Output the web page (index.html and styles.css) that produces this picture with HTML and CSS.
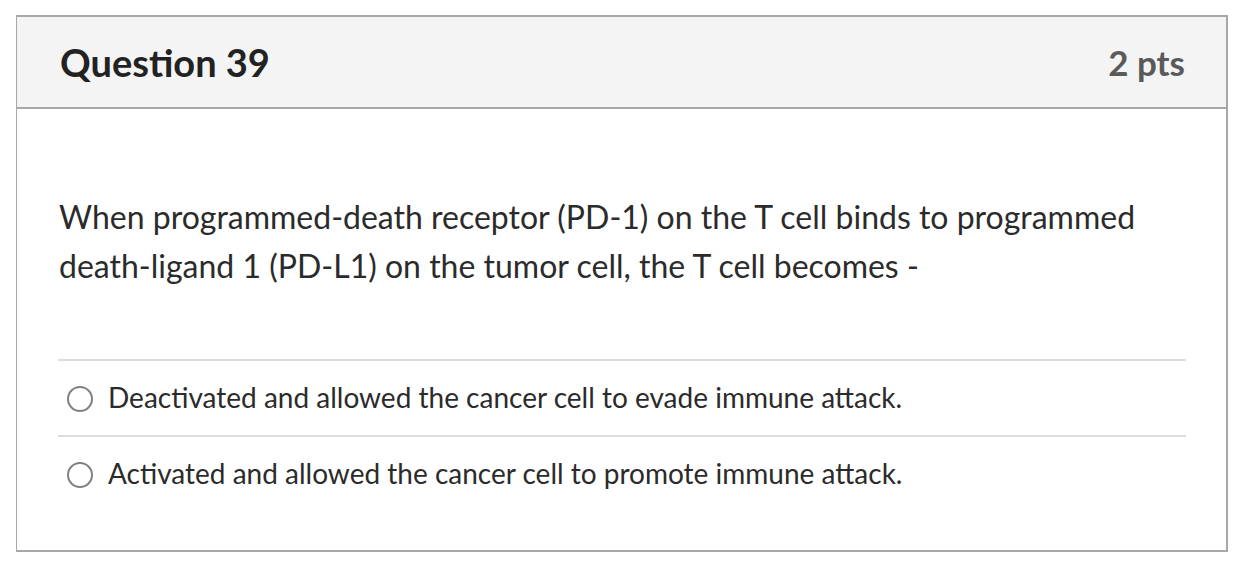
FILE: index.html
```html
<!DOCTYPE html>
<html lang="en">
<head>
<meta charset="utf-8">
<title>Question 39</title>
<link rel="stylesheet" href="styles.css">
</head>
<body>
<div class="card">
  <div class="card-header">
    <div class="title">Question 39</div>
    <div class="pts">2 pts</div>
  </div>
  <div class="card-body">
    <p class="question-text">When programmed-death receptor (PD-1) on the T cell binds to programmed death-ligand 1 (PD-L1) on the tumor cell, the T cell becomes -</p>
    <div class="answers">
      <label class="answer"><span class="radio"></span><span class="answer-text">Deactivated and allowed the cancer cell to evade immune attack.</span></label>
      <label class="answer"><span class="radio"></span><span class="answer-text">Activated and allowed the cancer cell to promote immune attack.</span></label>
    </div>
  </div>
</div>
</body>
</html>
```
FILE: styles.css
```css
html, body {
  margin: 0;
  padding: 0;
  background: #ffffff;
}
body {
  font-family: Lato, "Noto Sans", sans-serif;
  color: #2b2b2b;
}
.card {
  margin: 15px 26px 0 16px;
  border: 2px solid #a8a8a8;
  border-left-width: 1px;
}
.card-header {
  height: 90px;
  background: #f4f4f4;
  border-bottom: 2px solid #a8a8a8;
  display: flex;
  align-items: center;
  justify-content: space-between;
  padding: 0 41px 0 43px;
}
.title {
  font-weight: 700;
  font-size: 38px;
  color: #222;
}
.pts {
  font-weight: 700;
  font-size: 35px;
  color: #5a5a5a;
}
.card-body {
  padding: 83px 40px 39px 41px;
}
.question-text {
  margin: 0 0 69px 1px;
  font-size: 32px;
  line-height: 49px;
  color: #2b2b2b;
}
.answers {
  display: flex;
  flex-direction: column;
}
.answer {
  display: flex;
  align-items: center;
  height: 74px;
  border-top: 2px solid #dcdcdc;
  gap: 15px;
}
.radio {
  width: 22px;
  height: 22px;
  border: 2px solid #808080;
  border-radius: 50%;
  margin-left: 9px;
  margin-top: 2px;
  flex: none;
}
.answer-text {
  font-size: 28px;
  color: #2b2b2b;
  margin-bottom: 3px;
}
```
